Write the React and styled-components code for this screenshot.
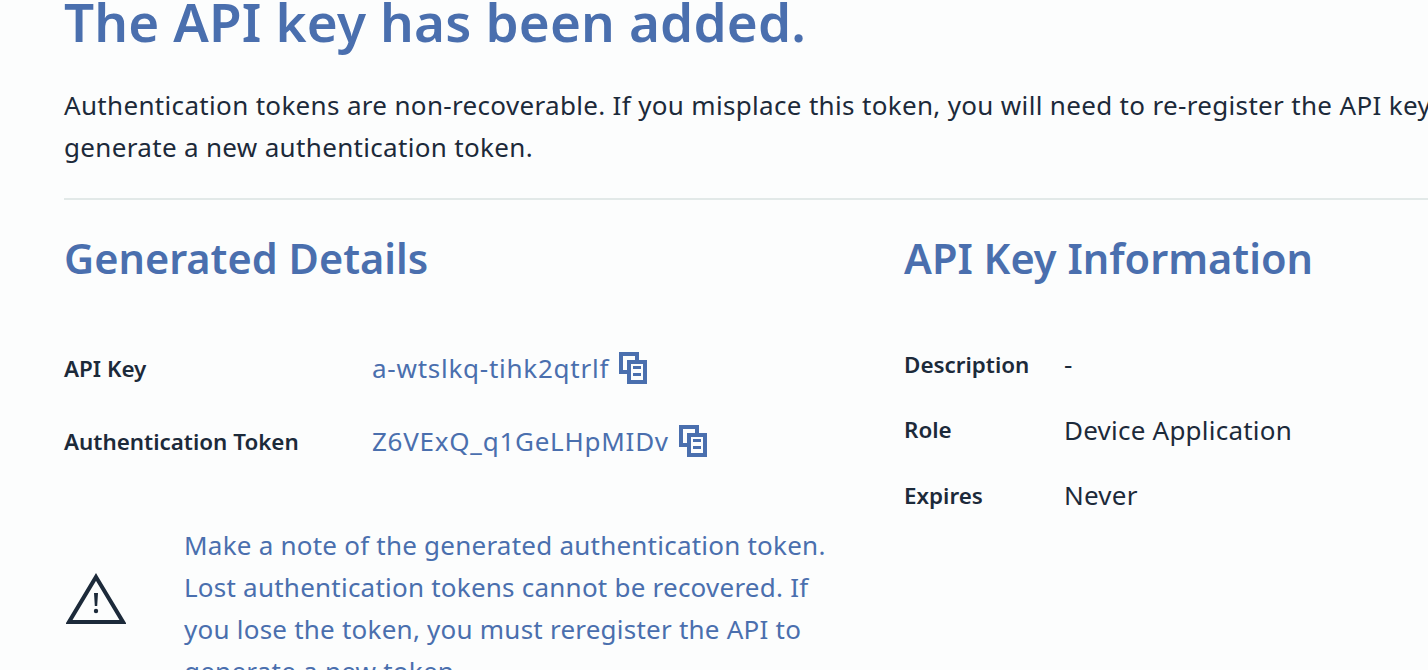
import React from "react";
import styled, { createGlobalStyle } from "styled-components";

const Global = createGlobalStyle`
  html, body {
    margin: 0;
    height: 100%;
    overflow: hidden;
    background: #fcfdfd;
  }
`;

const Page = styled.div`
  width: 1428px;
  height: 670px;
  overflow: hidden;
  box-sizing: border-box;
  padding-left: 64px;
  font-family: "Noto Sans", "Open Sans", sans-serif;
  color: #1c2a3a;
`;

const Content = styled.div`
  width: 1500px;
`;

const Title = styled.h1`
  margin: 0;
  height: 53px;
  font-size: 53px;
  line-height: 43px;
  font-weight: 600;
  letter-spacing: 0.15px;
  color: #4a6fae;
  white-space: nowrap;
`;

const Intro = styled.p`
  margin: 31px 0 0;
  font-size: 26px;
  letter-spacing: 0.33px;
  line-height: 42px;
  white-space: nowrap;
`;

const Rule = styled.hr`
  margin: 30px 0 0;
  border: 0;
  height: 2px;
  background: #e2e9e8;
`;

const Columns = styled.div`
  display: grid;
  grid-template-columns: 840px 1fr;
  margin-top: 33px;
`;

const SectionTitle = styled.h2`
  margin: 0;
  font-size: 41.5px;
  line-height: 50px;
  font-weight: 600;
  color: #4a6fae;
  white-space: nowrap;
`;

const DetailList = styled.div`
  display: flex;
  flex-direction: column;
  gap: 31px;
  margin-top: 64px;
`;

const DetailRow = styled.div`
  display: grid;
  grid-template-columns: 308px 1fr;
  align-items: center;
  height: 42px;
`;

const Label = styled.span`
  font-size: 22.4px;
  font-weight: 600;
`;

const Value = styled.span`
  display: inline-flex;
  align-items: center;
  gap: 10px;
  font-size: 26px;
  letter-spacing: 0.75px;
  color: #4a6fae;
`;

const Notice = styled.div`
  display: grid;
  grid-template-columns: 120px 650px;
  align-items: start;
  margin-top: 62px;
`;

const WarnSlot = styled.div`
  padding: 49px 0 0 2px;
`;

const NoticeText = styled.p`
  margin: 0;
  font-size: 26px;
  letter-spacing: 0.23px;
  line-height: 42px;
  color: #4a6fae;
`;

const InfoList = styled.div`
  display: flex;
  flex-direction: column;
  gap: 23.5px;
  margin-top: 60px;
`;

const InfoRow = styled.div`
  display: grid;
  grid-template-columns: 160px 1fr;
  align-items: center;
  height: 42px;
`;

const InfoValue = styled.span`
  font-size: 26px;
  letter-spacing: 0.23px;
`;

const CopyIcon = () => (
  <svg width="28" height="32" viewBox="0 0 28 32" fill="none">
    <path d="M0 0h20v4H4v14h4v4H0z" fill="#4a6fae" />
    <path d="M16 4h4v4h-4z" fill="#4a6fae" />
    <rect x="10" y="10" width="16" height="20" stroke="#4a6fae" strokeWidth="4" />
    <path d="M14 14h8v3H14zM14 21h8v3H14z" fill="#4a6fae" />
  </svg>
);

const WarnIcon = () => (
  <svg width="60" height="51" viewBox="0 0 60 51" fill="none" style={{ display: "block" }}>
    <path d="M30 4 L57 49 H3 Z" stroke="#1c2a3a" strokeWidth="4" strokeLinejoin="miter" />
    <path d="M28 20h4l-.8 13h-2.4z" fill="#1c2a3a" />
    <circle cx="30" cy="38" r="2.2" fill="#1c2a3a" />
  </svg>
);

export default function App() {
  return (
    <Page>
      <Global />
      <Content>
        <Title>The API key has been added.</Title>
        <Intro>
          Authentication tokens are non-recoverable. If you misplace this token, you will need to re-register the API key to
          <br />
          generate a new authentication token.
        </Intro>
        <Rule />
        <Columns>
          <div>
            <SectionTitle>Generated Details</SectionTitle>
            <DetailList>
              <DetailRow>
                <Label>API Key</Label>
                <Value>a-wtslkq-tihk2qtrlf <CopyIcon /></Value>
              </DetailRow>
              <DetailRow>
                <Label>Authentication Token</Label>
                <Value>Z6VExQ_q1GeLHpMIDv <CopyIcon /></Value>
              </DetailRow>
            </DetailList>
            <Notice>
              <WarnSlot><WarnIcon /></WarnSlot>
              <NoticeText>
                Make a note of the generated authentication token. Lost authentication tokens cannot be recovered. If you lose the token, you must reregister the API to generate a new token.
              </NoticeText>
            </Notice>
          </div>
          <div>
            <SectionTitle>API Key Information</SectionTitle>
            <InfoList>
              <InfoRow><Label>Description</Label><InfoValue>-</InfoValue></InfoRow>
              <InfoRow><Label>Role</Label><InfoValue>Device Application</InfoValue></InfoRow>
              <InfoRow><Label>Expires</Label><InfoValue>Never</InfoValue></InfoRow>
            </InfoList>
          </div>
        </Columns>
      </Content>
    </Page>
  );
}
